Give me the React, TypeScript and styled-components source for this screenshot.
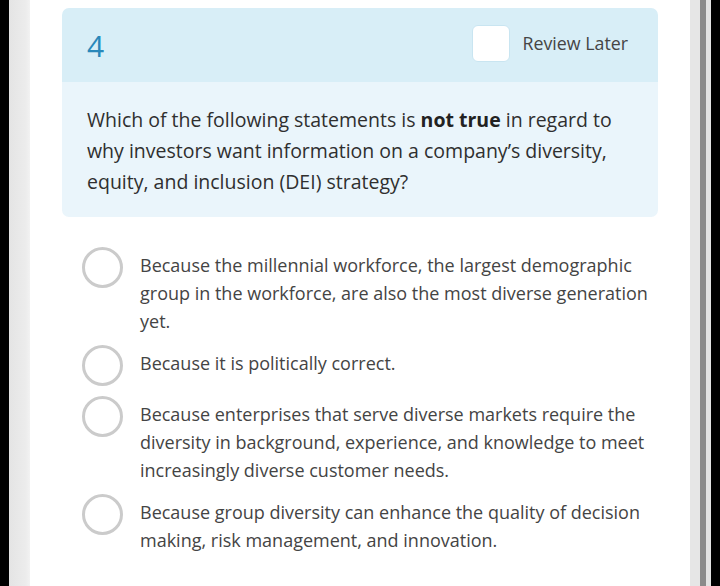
import React from "react";
import styled, { createGlobalStyle } from "styled-components";

const Global = createGlobalStyle`
  html, body { margin: 0; padding: 0; background: #000; }
  body { font-family: "Open Sans", "Noto Sans", sans-serif; }
  * { box-sizing: border-box; }
`;

const Frame = styled.div`
  display: flex;
  width: 720px;
  height: 586px;
  overflow: hidden;
  background: #000;
`;

const Edge = styled.div<{ $w: number; $bg: string }>`
  flex: 0 0 ${(p) => p.$w}px;
  background: ${(p) => p.$bg};
`;

const Screen = styled.div`
  flex: 1;
  background: #fff;
  padding: 8px 32px 0 32px;
  display: flex;
  flex-direction: column;
`;

const Card = styled.section`
  border-radius: 7px;
  overflow: hidden;
`;

const Header = styled.div`
  height: 74px;
  background: #d8eef7;
  display: flex;
  align-items: center;
  justify-content: space-between;
  padding: 0 30px 0 25px;
`;

const Number = styled.div`
  font-size: 30px;
  font-weight: 500;
  color: #2a88ba;
  line-height: 1;
  margin-top: 2px;
`;

const Review = styled.label`
  display: flex;
  align-items: center;
  gap: 13px;
  font-size: 17.8px;
  color: #454545;
  margin-top: -4px;
`;

const Box = styled.span`
  width: 38px;
  height: 37px;
  border-radius: 6px;
  background: #fff;
  border: 1px solid #c9e5f1;
  display: inline-block;
`;

const Body = styled.div`
  background: #eaf5fb;
  padding: 22px 30px 20px 25px;
  font-size: 19.5px;
  line-height: 31px;
  color: #2f2f2f;
  b { font-weight: 700; color: #222; }
`;

const Options = styled.ul`
  list-style: none;
  margin: 30px 0 0 0;
  padding: 0 0 0 20px;
  display: flex;
  flex-direction: column;
  gap: 10px;
`;

const Option = styled.li`
  display: flex;
  align-items: flex-start;
  gap: 17px;
`;

const Radio = styled.span`
  flex: 0 0 41px;
  width: 41px;
  height: 41px;
  border-radius: 50%;
  border: 3px solid #cbcbcb;
  background: #fff;
`;

const OptionText = styled.div`
  padding-top: 4px;
  font-size: 18px;
  line-height: 28px;
  color: #444;
  max-width: 515px;
`;

const options = [
  "Because the millennial workforce, the largest demographic group in the workforce, are also the most diverse generation yet.",
  "Because it is politically correct.",
  "Because enterprises that serve diverse markets require the diversity in background, experience, and knowledge to meet increasingly diverse customer needs.",
  "Because group diversity can enhance the quality of decision making, risk management, and innovation.",
];

export default function App() {
  return (
    <>
      <Global />
      <Frame>
        <Edge $w={9} $bg="#000" />
        <Edge $w={21} $bg="linear-gradient(90deg, #e4e4e4, #ececec 80%, #f2f2f2)" />
        <Screen>
          <Card>
            <Header>
              <Number>4</Number>
              <Review>
                <Box />
                Review Later
              </Review>
            </Header>
            <Body>
              Which of the following statements is <b>not true</b> in regard to why
              investors want information on a company’s diversity, equity, and
              inclusion (DEI) strategy?
            </Body>
          </Card>
          <Options>
            {options.map((o) => (
              <Option key={o}>
                <Radio />
                <OptionText>{o}</OptionText>
              </Option>
            ))}
          </Options>
        </Screen>
        <Edge $w={10} $bg="#e6e6e6" />
        <Edge $w={6} $bg="#8a8a8a" />
        <Edge $w={5} $bg="#e2e2e2" />
        <Edge $w={9} $bg="#000" />
      </Frame>
    </>
  );
}
